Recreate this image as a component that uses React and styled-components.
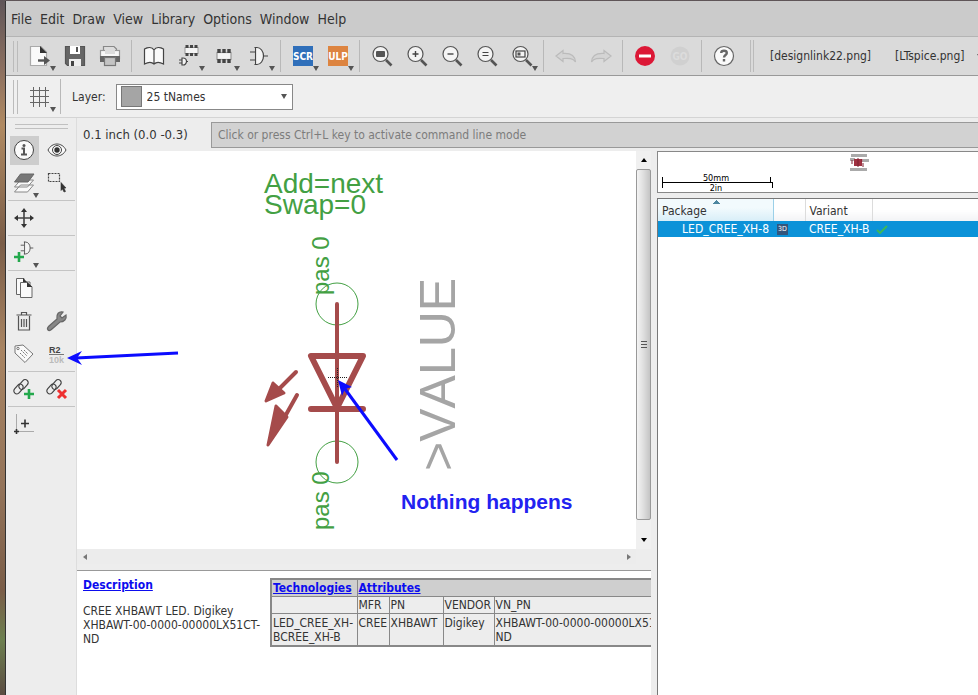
import React from 'react'
import styled, { createGlobalStyle, css } from 'styled-components'

const menus = ['File', 'Edit', 'Draw', 'View', 'Library', 'Options', 'Window', 'Help']

const Lens = ({ children }) => (
    <>
        <path d="M4 4L9.500 9.500" stroke="#555" strokeWidth="2.600" fill="none" />
        <circle cx="-1.500" cy="-2" r="7.500" fill="#f4f4f4" stroke="#555" strokeWidth="1.200" />
        {children}
    </>
)

const Gate = () => (
    <>
        <path d="M-4.500 -8.500H-2A6.500 8.500 0 0 1 -2 8.500H-4.500" fill="#f4f4f4" />
        <path d="M-3.500 -9V9M-9 -4H-4M-9 4H-4M4.500 0H9" />
    </>
)

const Chain = () => (
    <g strokeWidth="1.200" stroke="#444">
        <rect x="-3" y="-5.500" width="6" height="11" rx="3" transform="translate(-5.500 0) rotate(42)" />
        <rect x="-3" y="-5.500" width="6" height="11" rx="3" transform="translate(-.5 -4.500) rotate(42)" />
    </g>
)

const icons = {
    newFile: (
        <>
            <path d="M-9.500 -9.500H1L6.500 -4V9.500H-9.500Z" fill="#fafafa" stroke="#aaa" />
            <path d="M0 -10L7 -3H0Z" fill="#333" stroke="none" />
            <path d="M-2 4.500H6" stroke="#555" strokeWidth="2.400" />
            <path d="M4 0L10 4.500L4 9Z" fill="#555" stroke="none" />
        </>
    ),
    save: (
        <>
            <path d="M-9.500 -9.500H9.500V9.500H-7.500L-9.500 7.500Z" fill="#666" stroke="#555" />
            <rect x="-5" y="-10" width="10" height="8" fill="#fff" stroke="none" />
            <rect x="1" y="-9" width="2" height="5" fill="#555" stroke="none" />
            <rect x="-6" y="3" width="12" height="7" fill="#eee" stroke="none" />
            <rect x="-4" y="5" width="3" height="5" fill="#444" stroke="none" />
        </>
    ),
    print: (
        <>
            <path d="M-6.500 -2V-9.500H4L6.500 -7V-2" fill="#ddd" stroke="#888" />
            <rect x="-9.500" y="-5.500" width="19" height="8" fill="#f8f8f8" stroke="#999" />
            <rect x="-5" y="-7" width="10" height="5" fill="#ddd" stroke="none" />
            <path d="M-10 0H10V6H-10Z" fill="#666" stroke="none" />
            <rect x="-5.500" y="1.500" width="11" height="8" fill="#c4c4c4" stroke="#777" />
        </>
    ),
    book: (
        <path d="M0 -6C-2 -9 -6 -9 -9.500 -7V8C-6 6 -2 6 0 8C2 6 6 6 9.500 8V-7C6 -9 2 -9 0 -6V8" fill="#fafafa" />
    ),
    schematic: (
        <>
            <rect x="-4" y="-8.500" width="13" height="6" fill="#f4f4f4" stroke="#999" strokeWidth="1" />
            <path d="M-2 -8V-11M2.500 -8V-11M7 -8V-11M-2 -3V0M2.500 -3V0M7 -3V0" strokeWidth="3" />
            <path d="M-7 2H-6A3.500 3.500 0 0 1 -6 9H-7ZM-10 4H-7M-10 7H-7M-3 5.500H-1" fill="#f4f4f4" strokeWidth="1.200" />
        </>
    ),
    device: (
        <>
            <rect x="-7" y="-3.500" width="14" height="7" fill="#f4f4f4" stroke="#999" />
            <path d="M-5 -3V-7M0 -3V-7M5 -3V-7M-5 3V7M0 3V7M5 3V7" strokeWidth="3.400" />
        </>
    ),
    gate: <Gate />,
    scr: (
        <>
            <rect x="-10" y="-10" width="20" height="20" fill="#2f6fba" stroke="none" />
            <text textAnchor="middle" y="4">SCR</text>
        </>
    ),
    ulp: (
        <>
            <rect x="-10" y="-10" width="20" height="20" fill="#dd8440" stroke="none" />
            <text textAnchor="middle" y="4">ULP</text>
        </>
    ),
    zoomFit: <Lens><rect x="-6" y="-5" width="9" height="6" rx="1" fill="#555" stroke="none" /></Lens>,
    zoomIn: <Lens><path d="M-4.500 -2H1.500M-1.500 -5V1" strokeWidth="1.400" /></Lens>,
    zoomOut: <Lens><path d="M-4.500 -2H1.500" strokeWidth="1.400" /></Lens>,
    zoomRedraw: <Lens><path d="M-4.500 -3.500H1.500M-4.500 -.5H1.500" strokeWidth="1.200" /></Lens>,
    zoomSelect: (
        <Lens>
            <rect x="-6" y="-5" width="9" height="6" strokeWidth="1.200" />
            <rect x="-4.500" y="-3.500" width="3" height="3" fill="#555" stroke="none" />
        </Lens>
    ),
    undo: <path d="M-10 0L-3 -5.500V-2.500C4 -3 9 -1 9.500 6C7 2 3 2 -3 2.500V5.500Z" fill="#d4d4d4" stroke="#bbb" />,
    redo: <path d="M10 0L3 -5.500V-2.500C-4 -3 -9 -1 -9.500 6C-7 2 -3 2 3 2.500V5.500Z" fill="#d4d4d4" stroke="#bbb" />,
    stop: (
        <>
            <circle r="10" fill="#dc1836" stroke="none" />
            <path d="M-6 0H6" stroke="#fff" strokeWidth="3" />
        </>
    ),
    go: (
        <>
            <circle r="9.500" fill="#d0d0d0" stroke="none" />
            <text textAnchor="middle" y="4" fill="#dcdcdc">GO</text>
        </>
    ),
    help: (
        <>
            <circle r="9.500" fill="#fafafa" stroke="#666" />
            <path d="M-2.800 -3C-2.800 -6 2.800 -6 2.800 -3C2.800 -1 0 -1 0 1.500M0 3V5.500" stroke="#666" strokeWidth="2.400" />
        </>
    ),
    grid: <path d="M-6.500 -10V10M-.5 -10V10M5.500 -10V10M-10 -6.500H9M-10 -.5H9M-10 5.500H9" stroke="#666" strokeWidth="1" />,
    info: (
        <>
            <circle r="9.500" fill="#fafafa" strokeWidth="1" />
            <circle cx="0" cy="-4.500" r="1.500" fill="#555" stroke="none" />
            <path d="M-2.500 -1.500H0V4.500M-3 4.500H3" stroke="#555" strokeWidth="2" />
        </>
    ),
    eye: (
        <>
            <path d="M-9 0C-5 -8 5 -8 9 0C5 8 -5 8 -9 0Z" fill="#fafafa" strokeWidth="1" />
            <circle r="4.500" strokeWidth="1" />
            <circle r="2.700" fill="#333" stroke="none" />
        </>
    ),
    layers: (
        <>
            <path d="M-9.500 9L-3.500 2H9.500L3.500 9ZM-9.500 4L-3.500 -3H9.500L3.500 4Z" fill="#fafafa" stroke="#888" strokeWidth="1" />
            <path d="M-9.500 -1L-3.500 -9H10L4 -1Z" fill="#777" stroke="#666" strokeWidth="1" />
        </>
    ),
    group: (
        <>
            <rect x="-8.500" y="-9.500" width="11" height="8" strokeDasharray="2 1" />
            <path d="M4 -.5L9 5H7L8.500 8.500L7 9L5.500 6L4 7.500Z" fill="#333" stroke="#333" strokeWidth=".6" />
        </>
    ),
    move: (
        <>
            <path d="M-7 0H7M0 -7V7" strokeWidth="1.600" />
            <path d="M-10 0L-6 -3V3ZM10 0L6 -3V3ZM0 -10L-3 -6H3ZM0 10L-3 6H3Z" fill="#333" stroke="none" />
        </>
    ),
    addGate: (
        <>
            <g transform="translate(3 -5) scale(.7)"><Gate /></g>
            <path d="M-10 4H0M-5 -1V9" stroke="#23a84c" strokeWidth="2.600" />
        </>
    ),
    copy: (
        <>
            <path d="M-7.500 -9.500H0V-6H6V6.500H-7.500Z" fill="#fafafa" stroke="#666" strokeWidth="1" />
            <path d="M-3.500 -5.500H3L8 -1V9.500H-3.500Z" fill="#fafafa" stroke="#666" strokeWidth="1" />
            <path d="M3 -6L8.500 -1H3ZM-1 -10L3 -6H-1Z" fill="#333" stroke="none" />
        </>
    ),
    trash: (
        <path d="M-7.500 -6H7.500M-2.500 -6.500V-8.500H2.500V-6.500M-5.500 -5V9H5.500V-5M-2.500 -2V6M0 -2V6M2.500 -2V6" stroke="#555" />
    ),
    wrench: (
        <path d="M-9 9C-10 8 -9 6 -8 5L0 -2C-1 -7 2 -10 6 -9L3 -5L5 -3L9 -6C10 -2 7 1 3 1L-5 8C-6 9 -8 10 -9 9Z" fill="#888" stroke="#666" />
    ),
    tag: (
        <>
            <path d="M-9 -8L-1 -9L9 0L1 8.500L-9 -1Z" fill="#fafafa" stroke="#777" strokeWidth="1" />
            <circle cx="-6" cy="-5.500" r="1.200" stroke="#777" strokeWidth="1" />
            <path d="M-3 -4L3 2M-4 -1L1 4M0 -4L4 0" stroke="#777" strokeWidth="1" strokeDasharray="2 1" />
        </>
    ),
    value: (
        <>
            <text x="-8" y="-1" fill="#444">R2</text>
            <path d="M-8 .5H7" stroke="#777" strokeWidth="1" />
            <text x="-8" y="9" fill="#bbb">10k</text>
        </>
    ),
    link: <><Chain /><path d="M0 5H10M5 0V10" stroke="#23a84c" strokeWidth="2.600" /></>,
    unlink: <><Chain /><path d="M1 1L9 9M9 1L1 9" stroke="#ee3030" strokeWidth="3" /></>,
    origin: (
        <>
            <path d="M-7.500 -10V7.500H10" stroke="#aaa" strokeWidth="1" />
            <path d="M-10 7.500H-5M-7.500 5V10M-3 -.5H5M1 -4.500V3.500" stroke="#333" strokeWidth="1.600" />
        </>
    ),
}

const toolbarGroups = [
    [['newFile', 'New', true], ['save', 'Save'], ['print', 'Print']],
    [['book', 'Library'], ['schematic', 'Device', true], ['device', 'Package', true], ['gate', 'Symbol', true]],
    [['scr', 'Run script', true], ['ulp', 'Run ULP', true]],
    [['zoomFit', 'Fit'], ['zoomIn', 'Zoom in'], ['zoomOut', 'Zoom out'], ['zoomRedraw', 'Redraw'], ['zoomSelect', 'Select', true]],
    [['undo', 'Undo'], ['redo', 'Redo']],
    [['stop', 'Stop'], ['go', 'Go']],
    [['help', 'Help']],
]

const toolGroups = [
    [['info', 'Info'], ['eye', 'Show'], ['layers', 'Layers', true], ['group', 'Group']],
    [['move', 'Move']],
    [['addGate', 'Add', true]],
    [['copy', 'Copy'], null, ['trash', 'Delete'], ['wrench', 'Change'], ['tag', 'Name'], ['value', 'Value']],
    [['link', 'Connect'], ['unlink', 'Disconnect']],
    [['origin', 'Origin']],
]

const BarButton = ({ item: [name, label, drop] }) => (
    <BarBtn type="button" aria-label={label}>
        <Icon viewBox="-18 -19 35 38" $w={35} $h={38}>
            {icons[name]}
            {drop && <path d="M10 10H16L13 15Z" fill="#555" stroke="none" />}
        </Icon>
    </BarBtn>
)

const Tool = ({ item: [name, label, drop], active }) => (
    <ToolBtn type="button" aria-label={label}>
        <ToolIcon viewBox="-14 -14 29 29" $w={29} $h={29} $active={active}>
            {icons[name]}
            {drop && <path d="M9 10H15L12 15Z" fill="#555" stroke="none" />}
        </ToolIcon>
    </ToolBtn>
)

const Symbol = () => (
    <Drawing viewBox="77 151 559 398" preserveAspectRatio="xMidYMid meet">
        <g fill="#43a043" fontSize="28">
            <text x="264" y="193">Add=next</text>
            <text x="264" y="214">Swap=0</text>
            <text fontSize="24" transform="translate(329 295) rotate(-90)">pas 0</text>
            <text fontSize="24" transform="translate(329 530) rotate(-90)">pas 0</text>
        </g>
        <text fontSize="50" fill="#a5a5a5" transform="translate(455 471) rotate(-90)">&gt;VALUE</text>
        <g fill="none" stroke="#43a043">
            <circle cx="337" cy="304" r="21" />
            <circle cx="337" cy="462" r="21" />
        </g>
        <g fill="none" stroke="#a54b4b" strokeWidth="4" strokeLinecap="round" strokeLinejoin="round">
            <path d="M337 304V462M296 372L276 392M297 395L283 420" />
            <path strokeWidth="6" d="M311 356H363L337 408ZM311 409H363" />
            <path strokeWidth="3" fill="#a54b4b" d="M266 401L273 383L284 393ZM268 445L276 406L287 417Z" />
        </g>
        <path d="M328 377.500H348M337.500 368V388" stroke="#222" strokeDasharray="1 1" />
    </Drawing>
)

const Notes = () => (
    <NotesLayer width="600" height="540" viewBox="0 0 600 540">
        <g stroke="#0c0cff" strokeWidth="3">
            <path d="M178 353L76 358" />
            <path d="M397 460L345 389" />
        </g>
        <path d="M67 358L82 351L77 358L82 365ZM338 380L352 387L345 389L342 396Z" fill="#0c0cff" />
        <text x="401" y="509" fill="#2222f0" fontSize="21" fontWeight="bold">Nothing happens</text>
    </NotesLayer>
)

const App = () => {
    return (
        <>
            <GlobalStyle />
            <Desktop>
                <AppWindow>
                    <MenuBar>
                        {menus.map(m => <MenuItem type="button" key={m}>{m}</MenuItem>)}
                    </MenuBar>

                    <Toolbar>
                        <Handle />
                        {toolbarGroups.map((group, i) => (
                            <BarGroup key={i}>
                                {group.map(item => <BarButton key={item[0]} item={item} />)}
                            </BarGroup>
                        ))}
                        <Handle $tall />
                        <FileButton type="button">[designlink22.png]</FileButton>
                        <FileButton type="button">[LTspice.png]</FileButton>
                        <Caret />
                    </Toolbar>

                    <LayerBar>
                        <Handle />
                        <BarGroup><BarButton item={['grid', 'Grid', true]} /></BarGroup>
                        <LayerLabel htmlFor="layer">Layer:</LayerLabel>
                        <SelectBox>
                            <Swatch />
                            <select id="layer" defaultValue="25">
                                <option value="25">25 tNames</option>
                            </select>
                            <Caret />
                        </SelectBox>
                    </LayerBar>

                    <Body>
                        <Sidebar>
                            <SideHandle />
                            {toolGroups.map((group, i) => (
                                <ToolGroup key={i}>
                                    {group.map((item, j) => item
                                        ? <Tool key={j} item={item} active={item[0] === 'info'} />
                                        : <span key={j} />)}
                                </ToolGroup>
                            ))}
                        </Sidebar>

                        <Main>
                            <CommandRow>
                                <Coords>0.1 inch (0.0 -0.3)</Coords>
                                <Command aria-label="Command line" placeholder="Click or press Ctrl+L key to activate command line mode" />
                            </CommandRow>

                            <Panes>
                                <Editor>
                                    <CanvasArea>
                                        <Canvas><Symbol /></Canvas>
                                        <VScroll>
                                            <ScrollArrow type="button" aria-label="Scroll up">
                                                <svg width="6" height="4"><path d="M0 4L3 0L6 4Z" /></svg>
                                            </ScrollArrow>
                                            <Thumb><i /><i /><i /></Thumb>
                                            <ScrollArrow type="button" aria-label="Scroll down">
                                                <svg width="6" height="4"><path d="M0 0L3 4L6 0Z" /></svg>
                                            </ScrollArrow>
                                        </VScroll>
                                        <HScroll>
                                            <ScrollArrow type="button" aria-label="Scroll left">
                                                <svg width="4" height="6"><path d="M4 0L0 3L4 6Z" fill="#777" /></svg>
                                            </ScrollArrow>
                                            <ScrollArrow type="button" aria-label="Scroll right">
                                                <svg width="4" height="6"><path d="M0 0L4 3L0 6Z" fill="#777" /></svg>
                                            </ScrollArrow>
                                        </HScroll>
                                    </CanvasArea>

                                    <Details>
                                        <Description>
                                            <a href="#description">Description</a>
                                            <p>CREE XHBAWT LED. Digikey<br />XHBAWT-00-0000-00000LX51CT-<br />ND</p>
                                        </Description>
                                        <AttrTable>
                                            <colgroup>
                                                <col width="86" /><col width="32" /><col width="54" /><col width="51" /><col width="187" />
                                            </colgroup>
                                            <thead>
                                                <tr>
                                                    <th><a href="#technologies">Technologies</a></th>
                                                    <th colSpan="4"><a href="#attributes">Attributes</a></th>
                                                </tr>
                                            </thead>
                                            <tbody>
                                                <tr><td /><td>MFR</td><td>PN</td><td>VENDOR</td><td>VN_PN</td></tr>
                                                <tr>
                                                    <td>LED_CREE_XH-<br />BCREE_XH-B</td>
                                                    <td>CREE</td>
                                                    <td>XHBAWT</td>
                                                    <td>Digikey</td>
                                                    <td>XHBAWT-00-0000-00000LX51CT-<br />ND</td>
                                                </tr>
                                            </tbody>
                                        </AttrTable>
                                    </Details>
                                </Editor>

                                <Packages>
                                    <Preview>
                                        <svg width="220" height="40" viewBox="658 152 220 40">
                                            <path d="M662.500 177V188M662 182.500H772M770.500 177V183M772.500 182V188" stroke="#000" />
                                            <text x="716" y="181" textAnchor="middle">50mm</text>
                                            <text x="716" y="191" textAnchor="middle">2in</text>
                                            <path d="M851 155.500H867M850 159.500H855M863 160.500H869M850 169.500H867" stroke="#aaa" strokeWidth="3" />
                                            <path d="M854 159H862V166H854Z" fill="#a03040" />
                                            <path d="M862 159V162M863 163V167M858 158V167M852 160V164" stroke="#7a2030" strokeWidth="1" />
                                        </svg>
                                    </Preview>
                                    <PackageList>
                                        <PackageTable>
                                            <colgroup>
                                                <col width="115" /><col width="32" /><col width="67" /><col />
                                            </colgroup>
                                            <thead>
                                                <tr>
                                                    <th aria-sort="ascending">Package</th>
                                                    <th />
                                                    <th>Variant</th>
                                                    <th />
                                                </tr>
                                            </thead>
                                            <tbody>
                                                <tr>
                                                    <td>LED_CREE_XH-8</td>
                                                    <td><Badge>3D</Badge></td>
                                                    <td>CREE_XH-B</td>
                                                    <td><svg width="12" height="9" viewBox="0 0 12 9"><path d="M1 5L4 8L11 1" fill="none" stroke="#3cb85a" strokeWidth="2" /></svg></td>
                                                </tr>
                                            </tbody>
                                        </PackageTable>
                                    </PackageList>
                                </Packages>
                            </Panes>
                        </Main>
                    </Body>
                </AppWindow>
                <Notes />
            </Desktop>
        </>
    )
}

export default App

// Styled Components Styles
const GlobalStyle = createGlobalStyle`
* {
    box-sizing: border-box;
}
body {
    margin: 0;
    color: #333;
    font: 12px/14px "DejaVu Sans Condensed", "DejaVu Sans", sans-serif;
}
button, input, select {
    margin: 0;
    padding: 0;
    border: 0;
    border-radius: 0;
    background: none;
    color: inherit;
    font: inherit;
}
`

const Desktop = styled.div`
    position: relative;
    display: flex;
    min-height: 100vh;
    padding: 1px 0 0 5px;
    overflow: hidden;
    background: linear-gradient(#5f5558, #8c7060 10%, #b08a62 18%, #7a5d48 35%, #a88462 50%, #94745a 70%, #7a5d48 85%, #6d8050 92%, #5c4c42);
`

const AppWindow = styled.div`
    flex: 1;
    min-width: 0;
    display: flex;
    flex-direction: column;
    border-left: 1px solid #333;
    background: #ededed;
`

const MenuBar = styled.nav`
    display: flex;
    gap: 8px;
    height: 36px;
    padding-left: 5px;
    border-bottom: 1px solid #b4b4b4;
    background: #cbcbcb;
`

const MenuItem = styled.button`
    font-size: 14px;
`

const barStyles = css`
    display: flex;
    align-items: stretch;
    padding-left: 7px;
`

const Toolbar = styled.div`
    ${barStyles}
    height: 39px;
    border-bottom: 1px solid #999;
    background: #dadada;
`

const LayerBar = styled.div`
    ${barStyles}
    height: 42px;
    border-bottom: 1px solid #d4d4d4;
    background: #efefef;
`

const Handle = styled.span`
    flex: none;
    width: ${p => p.$tall ? 4 : 5}px;
    margin: ${p => p.$tall ? '3px 16px 3px 0' : '4px 4px 3px 0'};
    border: solid #bbb;
    border-width: 0 1px;
`

const BarGroup = styled.div`
    display: flex;
    align-items: center;
    & + &::before, ${LayerBar} &::after {
        content: '';
        width: 1px;
        margin: 3px 4px;
        align-self: stretch;
        background: #b8b8b8;
    }
    ${LayerBar} &::after {
        margin-left: 3px;
    }
    & + ${Handle} {
        margin-left: 9px;
    }
`

const BarBtn = styled.button`
    width: 35px;
    height: 38px;
`

const Icon = styled.svg`
    display: block;
    width: ${p => p.$w}px;
    height: ${p => p.$h}px;
    overflow: visible;
    fill: none;
    stroke: #444;
    stroke-width: 1.2;
    text {
        stroke: none;
        font: bold 10px "DejaVu Sans Condensed", sans-serif;
    }
    text:not([fill]) {
        fill: #fff;
    }
`

const FileButton = styled.button`
    flex: none;
    margin-right: 24px;
    & + & {
        margin-right: 12px;
    }
`

const Caret = styled.span`
    flex: none;
    align-self: center;
    border: solid transparent;
    border-width: 5px 3px 0;
    border-top-color: #555;
`

const LayerLabel = styled.label`
    align-self: center;
    margin: 0 10px 0 7px;
`

const SelectBox = styled.div`
    display: flex;
    align-items: center;
    align-self: center;
    gap: 5px;
    width: 177px;
    height: 26px;
    padding: 0 5px 0 4px;
    border: 1px solid #888;
    background: #fff;
    select {
        flex: 1;
        appearance: none;
        outline: none;
    }
`

const Swatch = styled.span`
    width: 21px;
    height: 21px;
    border: 1px solid #777;
    background: #a5a5a5;
`

const Body = styled.div`
    flex: 1;
    display: flex;
    min-height: 0;
`

const Sidebar = styled.aside`
    flex: none;
    width: 71px;
    padding: 6px 1px 0 2px;
    border-right: 1px solid #ddd;
`

const SideHandle = styled.div`
    height: 5px;
    margin: 0 7px 5px;
    border: solid #c0c0c0;
    border-width: 1px 0;
`

const ToolGroup = styled.div`
    display: grid;
    grid-template-columns: 33px 33px;
    grid-auto-rows: 33px;
    border-bottom: 1px solid #c4c4c4;
    & + & {
        padding-top: 1px;
    }
    &:last-child {
        border: 0;
    }
`

const ToolBtn = styled.button`
    display: grid;
    place-items: center;
`

const ToolIcon = styled(Icon)`
    background: ${p => p.$active ? '#cdcdcd' : 'none'};
    text {
        font: bold 9px "Liberation Sans", Arial, sans-serif;
    }
`

const Main = styled.main`
    flex: 1;
    min-width: 0;
    display: flex;
    flex-direction: column;
`

const CommandRow = styled.div`
    display: flex;
    align-items: center;
    height: 33px;
    padding-left: 6px;
`

const Coords = styled.span`
    flex: none;
    width: 128px;
    font-size: 13px;
`

const Command = styled.input`
    flex: 1;
    height: 26px;
    padding: 0 6px;
    border: 1px solid #999;
    border-right: 0;
    background: #d2d2d2;
    &::placeholder {
        color: #7c7c7c;
        opacity: 1;
    }
`

const Panes = styled.div`
    flex: 1;
    display: grid;
    grid-template-columns: minmax(0, 1fr) 321px;
    gap: 6px;
`

const Editor = styled.section`
    min-width: 0;
    display: flex;
    flex-direction: column;
    gap: 6px;
`

const CanvasArea = styled.div`
    flex: 1;
    display: grid;
    grid-template: minmax(0, 1fr) 15px / minmax(0, 1fr) 15px;
`

const Canvas = styled.div`
    min-height: 0;
    background: #fff;
`

const Drawing = styled.svg`
    display: block;
    width: 100%;
    height: 100%;
    font-family: "Liberation Sans", Arial, sans-serif;
    font-kerning: none;
`

const VScroll = styled.div`
    display: flex;
    flex-direction: column;
    background: #f0f0f0;
`

const HScroll = styled.div`
    display: flex;
    justify-content: space-between;
    background: #ececec;
`

const ScrollArrow = styled.button`
    display: grid;
    place-items: center;
    width: 15px;
    height: 18px;
    ${HScroll} & {
        height: 15px;
    }
`

const Thumb = styled.div`
    flex: 1;
    display: flex;
    flex-direction: column;
    align-items: center;
    justify-content: center;
    gap: 2px;
    margin-bottom: 11px;
    border: 1px solid #999;
    border-radius: 2px;
    background: linear-gradient(90deg, #f4f4f4, #dedede 50%, #c4c4c4);
    i {
        width: 6px;
        height: 1px;
        background: #555;
    }
`

const Details = styled.div`
    display: flex;
    align-items: flex-start;
    min-height: 125px;
    padding: 7px 0 0 6px;
    border-top: 1px solid #999;
    overflow: hidden;
    background: #fff;
    a {
        color: #0c0cee;
        font-weight: bold;
    }
`

const Description = styled.div`
    flex: none;
    width: 187px;
    p {
        margin: 12px 0 0;
        white-space: nowrap;
    }
`

const AttrTable = styled.table`
    flex: none;
    width: 410px;
    table-layout: fixed;
    border-collapse: collapse;
    border: 2px solid #888;
    background: #ededed;
    th, td {
        height: 17px;
        padding: 1px;
        border: 1px solid #888;
        text-align: left;
        vertical-align: top;
        white-space: nowrap;
    }
    tr:last-child td {
        padding-top: 2px;
    }
    th {
        background: #cfcfcf;
    }
`

const Packages = styled.section`
    display: flex;
    flex-direction: column;
    gap: 5px;
`

const Preview = styled.div`
    height: 42px;
    border: 1px solid #888;
    border-right: 0;
    background: #fff;
    svg {
        display: block;
        font-size: 9px;
    }
`

const PackageList = styled.div`
    flex: 1;
    border: solid #777;
    border-width: 1px 0 0 1px;
    background: #fff;
`

const PackageTable = styled.table`
    width: 100%;
    table-layout: fixed;
    border-collapse: collapse;
    th {
        height: 22px;
        padding: 2px 4px 0;
        border-right: 1px solid #dcdcdc;
        background: linear-gradient(#fff 50%, #f2f3f5);
        font-weight: normal;
        text-align: left;
    }
    th:last-child {
        border: 0;
    }
    th[aria-sort] {
        border-color: #9bd0e8;
        background:
            conic-gradient(from 135deg at 50% 0, #4c86a0 90deg, transparent 0) 54px 1px / 8px 4px no-repeat,
            linear-gradient(#f2fafd 40%, #d8eef8);
    }
    td {
        height: 16px;
        padding: 0 4px;
        background: #0c92d8;
        color: #fff;
        white-space: nowrap;
    }
    td:first-child {
        padding: 0 4px 0 0;
        text-align: right;
    }
    svg {
        display: block;
    }
`

const Badge = styled.span`
    display: block;
    width: 11px;
    height: 11px;
    background: #33557c;
    font-size: 7px;
    line-height: 11px;
    text-align: center;
`

const NotesLayer = styled.svg`
    position: absolute;
    top: 0;
    left: 0;
    pointer-events: none;
    font-family: "Liberation Sans", Arial, sans-serif;
`
